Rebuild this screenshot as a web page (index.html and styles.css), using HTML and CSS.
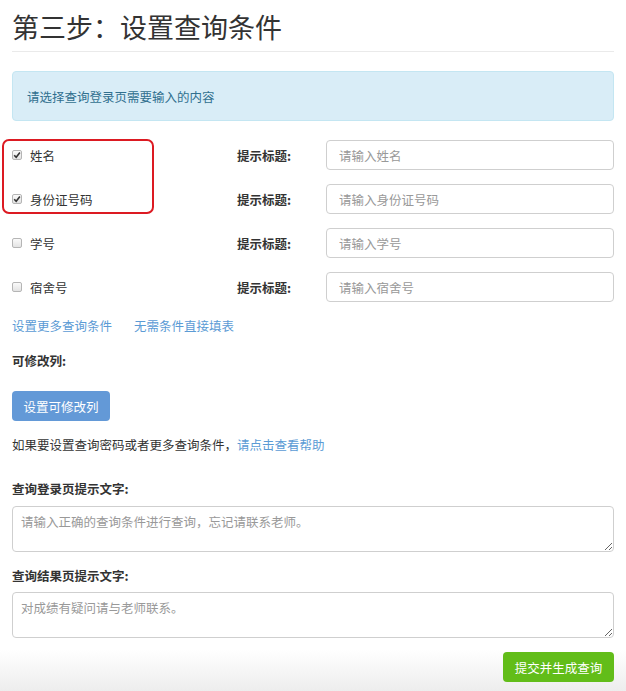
FILE: index.html
```html
<!DOCTYPE html>
<html lang="zh-CN">
<head>
<meta charset="utf-8">
<title>第三步：设置查询条件</title>
<link rel="stylesheet" href="styles.css">
</head>
<body>
<div class="page">
  <h1 class="title">第三步：设置查询条件</h1>
  <div class="alert">请选择查询登录页需要输入的内容</div>

  <div class="fields">
    <div class="highlight"></div>
    <div class="row">
      <label class="check"><span class="box checked"><svg viewBox="0 0 10 10" width="10" height="10"><path d="M2.2 5.2 L4.2 7.3 L7.9 2.6" fill="none" stroke="#333" stroke-width="1.6"/></svg></span>姓名</label>
      <span class="hint">提示标题:</span>
      <input class="input" type="text" placeholder="请输入姓名">
    </div>
    <div class="row">
      <label class="check"><span class="box checked"><svg viewBox="0 0 10 10" width="10" height="10"><path d="M2.2 5.2 L4.2 7.3 L7.9 2.6" fill="none" stroke="#333" stroke-width="1.6"/></svg></span>身份证号码</label>
      <span class="hint">提示标题:</span>
      <input class="input" type="text" placeholder="请输入身份证号码">
    </div>
    <div class="row">
      <label class="check"><span class="box"></span>学号</label>
      <span class="hint">提示标题:</span>
      <input class="input" type="text" placeholder="请输入学号">
    </div>
    <div class="row">
      <label class="check"><span class="box"></span>宿舍号</label>
      <span class="hint">提示标题:</span>
      <input class="input" type="text" placeholder="请输入宿舍号">
    </div>
  </div>

  <div class="links">
    <a class="link" href="#">设置更多查询条件</a>
    <a class="link" href="#">无需条件直接填表</a>
  </div>

  <div class="label-strong editable-label">可修改列:</div>
  <button class="btn btn-blue" type="button">设置可修改列</button>

  <p class="help">如果要设置查询密码或者更多查询条件，<a class="link" href="#">请点击查看帮助</a></p>

  <div class="label-strong login-label">查询登录页提示文字:</div>
  <textarea class="textarea" placeholder="请输入正确的查询条件进行查询，忘记请联系老师。"></textarea>

  <div class="label-strong result-label">查询结果页提示文字:</div>
  <textarea class="textarea textarea-2" placeholder="对成绩有疑问请与老师联系。"></textarea>

  <div class="actions">
    <button class="btn btn-green" type="button">提交并生成查询</button>
  </div>
</div>
</body>
</html>
```

FILE: styles.css
```css
html {
  height: 100%;
  background: linear-gradient(to bottom, #ffffff 0, #ffffff 650px, #ededed 691px);
}
body {
  margin: 0;
  font-family: "Noto Sans CJK SC", "Noto Sans", sans-serif;
  font-size: 12.5px;
  color: #333;
}
.page {
  padding: 0 12px;
}
.title {
  margin: 12px 0 0;
  padding-bottom: 9px;
  border-bottom: 1px solid #eaeaea;
  font-size: 27px;
  line-height: 30px;
  font-weight: 400;
  color: #333;
}
.alert {
  margin-top: 19px;
  height: 50px;
  box-sizing: border-box;
  display: flex;
  align-items: center;
  padding: 0 14px;
  background: #d9edf7;
  border: 1px solid #c4e6f2;
  border-radius: 4px;
  color: #31708f;
}
.fields {
  position: relative;
  margin-top: 19px;
}
.highlight {
  position: absolute;
  left: -10px;
  top: -1px;
  width: 152px;
  height: 75px;
  box-sizing: border-box;
  border: 2px solid #dc1a22;
  border-radius: 7px;
}
.row {
  display: grid;
  grid-template-columns: 225px 89px 1fr;
  align-items: center;
  height: 30px;
  margin-bottom: 14px;
}
.check {
  display: flex;
  align-items: center;
}
.box {
  width: 10px;
  height: 10px;
  box-sizing: border-box;
  border: 1px solid #b5b5b5;
  border-radius: 2px;
  background: linear-gradient(#fafafa, #e3e3e3);
  margin-right: 8px;
  display: flex;
  align-items: center;
  justify-content: center;
}
.box svg {
  flex: none;
}
.hint {
  font-weight: 700;
}
.input {
  height: 30px;
  box-sizing: border-box;
  border: 1px solid #cfcfcf;
  border-radius: 4px;
  padding: 0 12px;
  font: inherit;
  color: #555;
  width: 288px;
}
.input::placeholder,
.textarea::placeholder {
  color: #999;
}
.links {
  display: flex;
  gap: 22px;
  line-height: 20px;
  margin-top: 0;
}
.link {
  color: #5b9bd5;
  text-decoration: none;
}
.label-strong {
  font-weight: 700;
  line-height: 20px;
}
.editable-label {
  margin-top: 15px;
}
.btn {
  font: inherit;
  color: #fff;
  border: none;
  border-radius: 4px;
  height: 30px;
  cursor: pointer;
}
.btn-blue {
  display: block;
  margin-top: 20px;
  width: 98px;
  background: #6399d7;
}
.help {
  margin: 14px 0 0;
  line-height: 20px;
}
.login-label {
  margin-top: 24px;
}
.textarea {
  display: block;
  margin-top: 7px;
  width: 100%;
  height: 46px;
  box-sizing: border-box;
  border: 1px solid #cfcfcf;
  border-radius: 4px;
  padding: 5px 8px;
  font: inherit;
  line-height: 19px;
  color: #555;
}
.result-label {
  margin-top: 14px;
}
.textarea-2 {
  margin-top: 6px;
}
.actions {
  display: flex;
  justify-content: flex-end;
  margin-top: 14px;
}
.btn-green {
  width: 111px;
  background: #62bd19;
}
```
